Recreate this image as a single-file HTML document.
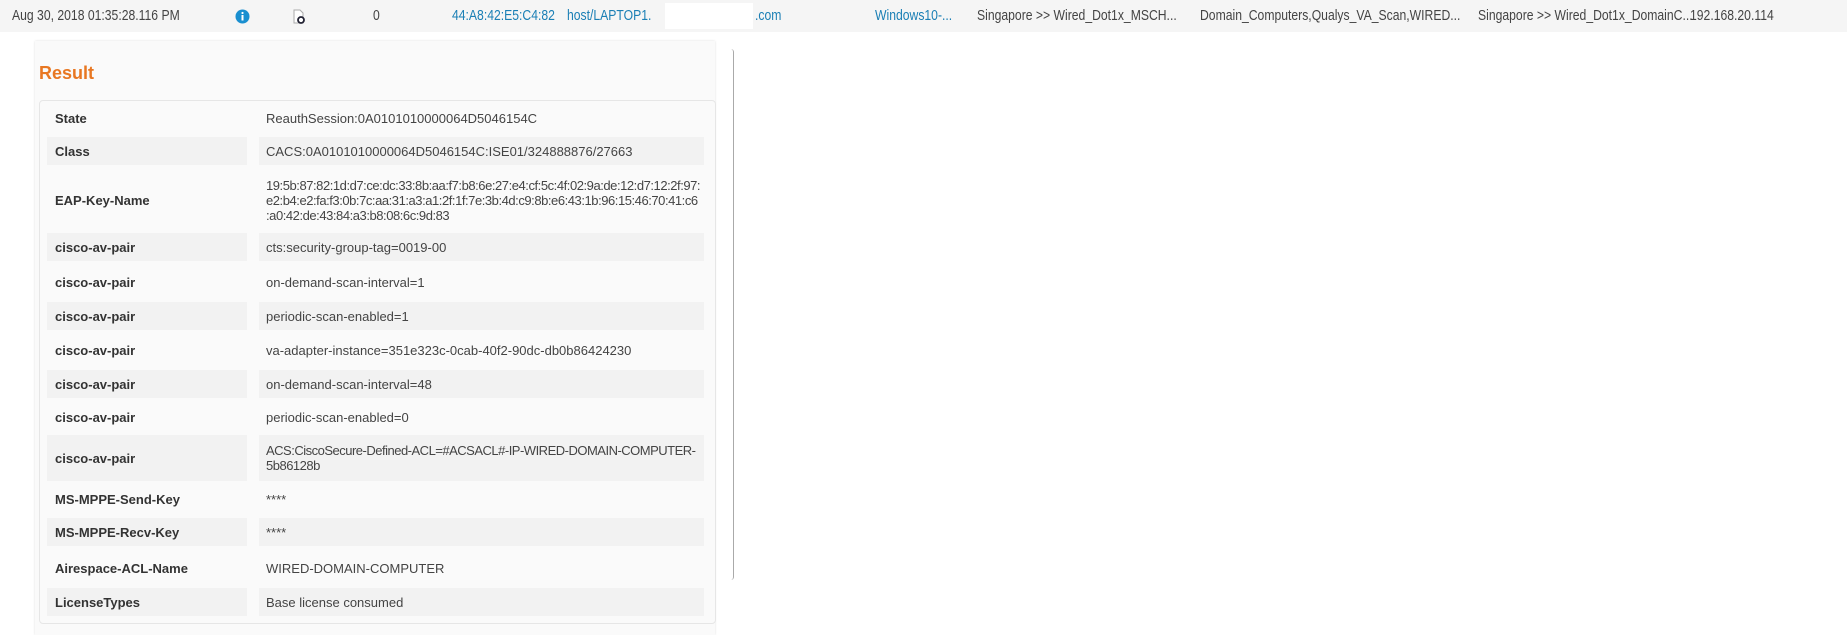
<!DOCTYPE html>
<html><head><meta charset="utf-8"><style>
body{margin:0;width:1847px;height:635px;background:#fff;position:relative;overflow:hidden;font-family:"Liberation Sans",Arial,sans-serif;font-size:13px;color:#444}
.top{position:absolute;left:0;top:0;width:1847px;height:32px;background:#f5f5f5}
.t{position:absolute;top:8px;white-space:nowrap;color:#444;font-size:14.5px;transform:scaleX(.84);transform-origin:0 0}
.l{color:#1a7fb5}
.frame{position:absolute;left:36px;top:49px;width:697px;height:531px;border-right:1px solid #aaa;border-radius:0 3px 3px 0}
.panel{position:absolute;left:35px;top:41px;width:680px;height:594px;background:#fafafa;box-shadow:0 0 2px #ddd}
.title{position:absolute;left:39px;top:63px;font-size:18px;font-weight:bold;color:#e87722}
.box{position:absolute;left:39px;top:100px;width:675px;height:522px;border:1px solid #e6e6e6;border-radius:4px;background:#fafafa}
.k,.v{position:absolute;display:flex;align-items:center;line-height:15px;white-space:nowrap}
.k{left:47px;width:200px;padding-left:8px;box-sizing:border-box;font-weight:bold;color:#333}
.v{left:259px;width:445px;padding-left:7px;box-sizing:border-box}
.s{background:#f2f2f2}
</style></head><body>
<div class="top"></div>
<div class="t" style="left:12px">Aug 30, 2018 01:35:28.116 PM</div>
<svg style="position:absolute;left:235px;top:9px" width="15" height="15"><circle cx="7.5" cy="7.5" r="7" fill="#1a8fd0"/><rect x="6.5" y="6" width="2" height="5.5" fill="#fff"/><circle cx="7.5" cy="4" r="1.1" fill="#fff"/></svg>
<svg style="position:absolute;left:293px;top:9px" width="14" height="16"><path d="M1 1h6l3 3v10H1z" fill="#fff" stroke="#aaa"/><circle cx="8" cy="11" r="3" fill="#fff" stroke="#223" stroke-width="1.8"/></svg>
<div class="t" style="left:373px">0</div>
<div class="t l" style="left:452px">44:A8:42:E5:C4:82</div>
<div class="t l" style="left:567px">host/LAPTOP1.</div>
<div style="position:absolute;left:665px;top:3px;width:88px;height:26px;background:#fff"></div>
<div class="t l" style="left:755px">.com</div>
<div class="t l" style="left:875px">Windows10-...</div>
<div class="t" style="left:977px">Singapore &gt;&gt; Wired_Dot1x_MSCH...</div>
<div class="t" style="left:1200px">Domain_Computers,Qualys_VA_Scan,WIRED...</div>
<div class="t" style="left:1478px">Singapore &gt;&gt; Wired_Dot1x_DomainC...</div>
<div class="t" style="left:1690px">192.168.20.114</div>
<div class="frame"></div>
<div class="panel"></div>
<div class="title">Result</div>
<div class="box"></div>

<div class="k" style="top:104px;height:28px">State</div><div class="v" style="top:104px;height:28px">ReauthSession:0A0101010000064D5046154C</div>
<div class="k s" style="top:137px;height:28px">Class</div><div class="v s" style="top:137px;height:28px">CACS:0A0101010000064D5046154C:ISE01/324888876/27663</div>
<div class="k" style="top:172px;height:56px">EAP-Key-Name</div><div class="v" style="top:172px;height:56px;letter-spacing:-0.45px">19:5b:87:82:1d:d7:ce:dc:33:8b:aa:f7:b8:6e:27:e4:cf:5c:4f:02:9a:de:12:d7:12:2f:97:<br>e2:b4:e2:fa:f3:0b:7c:aa:31:a3:a1:2f:1f:7e:3b:4d:c9:8b:e6:43:1b:96:15:46:70:41:c6<br>:a0:42:de:43:84:a3:b8:08:6c:9d:83</div>
<div class="k s" style="top:233px;height:28px">cisco-av-pair</div><div class="v s" style="top:233px;height:28px">cts:security-group-tag=0019-00</div>
<div class="k" style="top:268px;height:28px">cisco-av-pair</div><div class="v" style="top:268px;height:28px">on-demand-scan-interval=1</div>
<div class="k s" style="top:302px;height:28px">cisco-av-pair</div><div class="v s" style="top:302px;height:28px">periodic-scan-enabled=1</div>
<div class="k" style="top:336px;height:28px">cisco-av-pair</div><div class="v" style="top:336px;height:28px">va-adapter-instance=351e323c-0cab-40f2-90dc-db0b86424230</div>
<div class="k s" style="top:370px;height:28px">cisco-av-pair</div><div class="v s" style="top:370px;height:28px">on-demand-scan-interval=48</div>
<div class="k" style="top:403px;height:28px">cisco-av-pair</div><div class="v" style="top:403px;height:28px">periodic-scan-enabled=0</div>
<div class="k s" style="top:435px;height:46px">cisco-av-pair</div><div class="v s" style="top:435px;height:46px;letter-spacing:-0.5px">ACS:CiscoSecure-Defined-ACL=#ACSACL#-IP-WIRED-DOMAIN-COMPUTER-<br>5b86128b</div>
<div class="k" style="top:485px;height:28px">MS-MPPE-Send-Key</div><div class="v" style="top:485px;height:28px">****</div>
<div class="k s" style="top:518px;height:28px">MS-MPPE-Recv-Key</div><div class="v s" style="top:518px;height:28px">****</div>
<div class="k" style="top:554px;height:28px">Airespace-ACL-Name</div><div class="v" style="top:554px;height:28px">WIRED-DOMAIN-COMPUTER</div>
<div class="k s" style="top:588px;height:28px">LicenseTypes</div><div class="v s" style="top:588px;height:28px">Base license consumed</div>
</body></html>
